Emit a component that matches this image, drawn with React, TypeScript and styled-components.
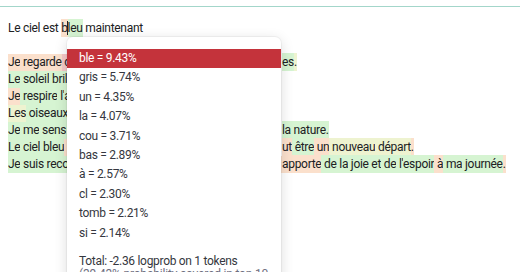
import React from 'react';
import styled, { createGlobalStyle } from 'styled-components';

type Tone = 'g' | 'o' | 'r' | 'y' | '';
type Token = [string, Tone];

const tones: Record<string, string> = {
  g: '#d6f4d2',
  o: '#fbe0cc',
  r: '#f5c9c9',
  y: '#eef3d0',
  '': 'transparent',
};

const GlobalStyle = createGlobalStyle`
  body {
    margin: 0;
    background: #ffffff;
    font-family: Roboto, "Liberation Sans", Arial, sans-serif;
    color: #202123;
  }
`;

const Page = styled.div`
  position: relative;
  width: 520px;
  height: 272px;
  overflow: hidden;
  padding-top: 6px;
  box-sizing: border-box;
`;

const Rule = styled.div`
  height: 1px;
  background: #a3d6ca;
`;

const Editor = styled.div`
  padding: 13px 8px 0;
  font-size: 12px;
  letter-spacing: -0.3px;
  line-height: 17px;
`;

const Line = styled.div`
  white-space: pre;
  height: 17px;
`;

const Blank = styled.div`
  height: 17px;
`;

/* the part of a sentence that runs under the token menu */
const Head = styled.span`
  display: inline-block;
  width: 274px;
  overflow: hidden;
  vertical-align: top;
`;

const Tok = styled.span<{ $tone: Tone }>`
  background: ${(p) => tones[p.$tone]};
  padding: 2px 0;
`;

const Caret = styled.span`
  display: inline-block;
  width: 1px;
  height: 14px;
  margin: 0 -0.5px;
  vertical-align: -3px;
  background: #202123;
`;

const Menu = styled.div`
  position: absolute;
  left: 67px;
  top: 37px;
  width: 214px;
  height: 260px;
  background: #ffffff;
  border-radius: 6px;
  box-shadow: 0 0 0 1px rgba(0, 0, 0, 0.04), 0 3px 14px rgba(0, 0, 0, 0.14);
  padding-top: 12px;
  box-sizing: border-box;
  font-size: 12px;
  letter-spacing: -0.3px;
  color: #353740;
`;

const Item = styled.div<{ $active?: boolean }>`
  height: 19.4px;
  line-height: 19.4px;
  padding-left: 12px;
  background: ${(p) => (p.$active ? '#c4333b' : 'transparent')};
  color: ${(p) => (p.$active ? '#ffffff' : '#353740')};
`;

const Summary = styled.div`
  margin-top: 12.5px;
  padding-left: 12px;
  line-height: 13px;
`;

const Note = styled.div`
  color: #6e6e80;
  letter-spacing: -0.2px;
`;

type Sentence = { head: Token[]; tail?: Token[] };

const paragraph: Sentence[] = [
  {
    head: [['Je', 'o'], [' regarde', 'o'], [' d', 'r'], ['ehors', 'g'], [' et', 'g'], [' je', 'g'], [' vois', 'g'], [' des', 'g'], [' nuages', 'g'], [' et', 'g'], [' des', 'o'], [' arbr', 'g']],
    tail: [['es', 'g'], ['.', 'y']],
  },
  { head: [['Le', 'g'], [' soleil', 'g'], [' brille', 'g'], [' dans', 'g'], [' le', 'g'], [' ciel', 'g'], [' bleu', 'g'], ['.', 'g']] },
  { head: [['Je', 'o'], [' respire', 'g'], [" l'", 'g'], ['air', 'g'], [' frais', 'g'], [' du', 'g'], [' matin', 'g'], ['.', 'g']] },
  { head: [['Les', 'y'], [' oiseaux', 'g'], [' chantent', 'g'], [' dans', 'g'], [' les', 'g'], [' arbres', 'g'], ['.', 'g']] },
  {
    head: [['Je', 'g'], [' me', 'g'], [' sens', 'g'], [' heureux', 'g'], [' et', 'g'], [' en', 'g'], [' parfaite', 'g'], [' harmonie', 'g'], [' avec', 'g'], [' ', 'g']],
    tail: [['la', 'g'], [' nature', 'g'], ['.', 'g']],
  },
  {
    head: [['Le', 'g'], [' ciel', 'g'], [' bleu', 'g'], [' me', 'o'], [' rappelle', 'g'], [' que', 'g'], [' chaque', 'g'], [' jour', 'g'], [' pe', 'o']],
    tail: [['ut', 'o'], [' être', 'g'], [' un', 'o'], [' nouveau', 'y'], [' départ', 'y'], ['.', 'o']],
  },
  {
    head: [['Je', 'g'], [' suis', 'g'], [' reco', 'g'], ['nnaissant', 'g'], [' pour', 'g'], [' ce', 'g'], [' beau', 'g'], [' soleil', 'g'], [' du', 'g'], [' matin', 'g'], [' qui', 'g'], [' ', 'o']],
    tail: [['apporte', 'o'], [' de', 'g'], [' la', 'g'], [' joie', 'g'], [' et', 'g'], [' de', 'g'], [" l'", 'g'], ['espoir', 'g'], [' à', 'o'], [' ma', 'g'], [' journée', 'g'], ['.', 'o']],
  },
];

const options = [
  ['ble', '9.43'],
  ['gris', '5.74'],
  ['un', '4.35'],
  ['la', '4.07'],
  ['cou', '3.71'],
  ['bas', '2.89'],
  ['à', '2.57'],
  ['cl', '2.30'],
  ['tomb', '2.21'],
  ['si', '2.14'],
];

const renderTokens = (tokens: Token[]) =>
  tokens.map(([text, tone], j) => (
    <Tok key={j} $tone={tone}>
      {text}
    </Tok>
  ));

const App: React.FC = () => {
  return (
    <Page>
      <GlobalStyle />
      <Rule />
      <Editor>
        <Line>
          Le ciel est <Tok $tone="o">b</Tok>
          <Caret />
          <Tok $tone="g">leu</Tok> maintenant
        </Line>
        <Blank />
        {paragraph.map((s, i) => (
          <Line key={i}>
            <Head>{renderTokens(s.head)}</Head>
            {s.tail && renderTokens(s.tail)}
          </Line>
        ))}
      </Editor>
      <Menu>
        {options.map(([tok, pct], i) => (
          <Item key={tok} $active={i === 0}>
            {tok} = {pct}%
          </Item>
        ))}
        <Summary>
          Total: -2.36 logprob on 1 tokens
          <Note>(39.43% probability covered in top 10 logits)</Note>
        </Summary>
      </Menu>
    </Page>
  );
};

export default App;
